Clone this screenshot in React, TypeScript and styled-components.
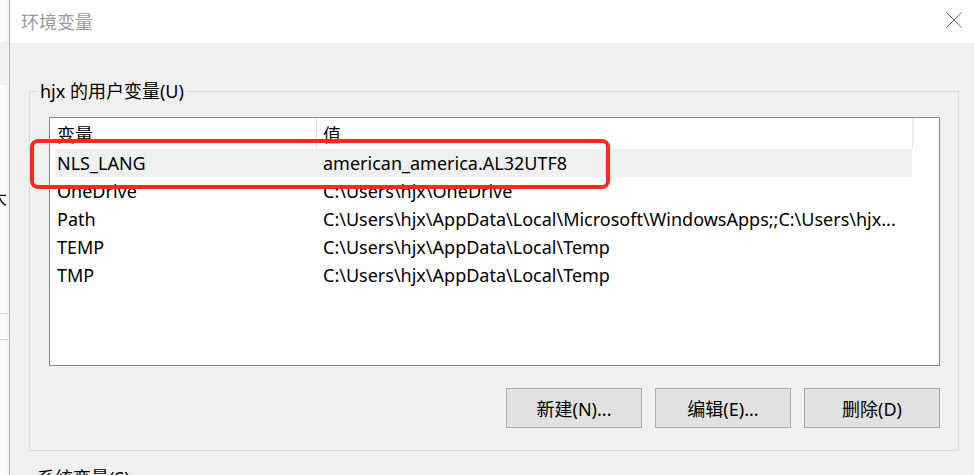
import React from 'react';
import styled, { createGlobalStyle } from 'styled-components';

const GlobalStyle = createGlobalStyle`
  html, body {
    margin: 0;
    padding: 0;
    background: #ffffff;
  }
  body {
    font-family: "Noto Sans", "Noto Sans CJK SC", sans-serif;
    font-size: 18px;
    color: #000000;
  }
`;

const Screen = styled.div`
  position: relative;
  display: flex;
  width: 974px;
  height: 475px;
  overflow: hidden;
`;

// window that sits behind the dialog, only its right edge shows
const BackWindow = styled.div`
  width: 9px;
  flex-shrink: 0;
  display: flex;
  flex-direction: column;
  overflow: hidden;
  background: linear-gradient(to right, #ffffff 0%, #ffffff 40%, #f2f2f2 100%);
`;

const BackBand = styled.div<{ $h: number; $bg: string }>`
  height: ${(p) => p.$h}px;
  flex-shrink: 0;
  background: ${(p) => p.$bg};
`;

const BackText = styled.div`
  margin: 103px 0 0 -10px;
  line-height: 20px;
  font-size: 17px;
  white-space: nowrap;
`;

const BackRule = styled.div<{ $top: number }>`
  margin-top: ${(p) => p.$top}px;
  height: 1px;
  background: #d9d9d9;
`;

const Dialog = styled.div`
  flex: 1;
  display: flex;
  flex-direction: column;
  border-left: 1px solid #b4b4b4;
`;

const TitleBar = styled.div`
  height: 43px;
  flex-shrink: 0;
  display: flex;
  align-items: center;
  justify-content: space-between;
  padding: 0 12px 0 11px;
  background: #ffffff;
`;

const Title = styled.span`
  color: #9a9a9a;
  margin-top: -2px;
`;

const CloseButton = styled.div`
  width: 16px;
  height: 16px;
  margin-top: -3px;
  display: flex;
`;

const Body = styled.div`
  flex: 1;
  background: #f0f0f0;
  padding: 48px 15px 0 19px;
`;

const GroupBox = styled.div`
  border: 1px solid #dcdcdc;
  padding: 0 18px 22px 19px;
  display: flex;
  flex-direction: column;
`;

const Legend = styled.div`
  align-self: flex-start;
  margin: -13px 0 0 -12px;
  padding: 0 3px;
  line-height: 24px;
  background: #f0f0f0;
`;

const ListView = styled.div`
  margin-top: 14px;
  height: 247px;
  border: 1px solid #828790;
  background: #ffffff;
  display: flex;
  flex-direction: column;
`;

const HeaderRow = styled.div`
  display: flex;
  height: 31px;
  flex-shrink: 0;
`;

const HeaderCell = styled.div<{ $w: number; $pad: number }>`
  width: ${(p) => p.$w}px;
  padding-left: ${(p) => p.$pad}px;
  box-sizing: border-box;
  border-right: 1px solid #e5e5e5;
  display: flex;
  align-items: center;
`;

const Row = styled.div<{ $selected?: boolean }>`
  display: flex;
  height: 28px;
  margin-left: 5px;
  width: 857px;
  background: ${(p) => (p.$selected ? '#f0f0f0' : 'transparent')};
  align-items: center;
`;

const NameCell = styled.div`
  width: 261px;
  flex-shrink: 0;
  padding-left: 2px;
  box-sizing: border-box;
  white-space: nowrap;
`;

const ValueCell = styled.div`
  flex: 1;
  min-width: 0;
  padding-left: 7px;
  white-space: nowrap;
  overflow: hidden;
`;

const ButtonRow = styled.div`
  display: flex;
  justify-content: flex-end;
  gap: 13px;
  margin-top: 22px;
`;

const Button = styled.button`
  width: 136px;
  height: 40px;
  border: 1px solid #adadad;
  background: #e1e1e1;
  font-family: inherit;
  font-size: 18px;
  color: #000000;
  padding: 0;
`;

const SectionLabel = styled.div`
  margin: 15px 0 0 8px;
  line-height: 24px;
`;

// red annotation drawn over the screenshot
const Highlight = styled.div`
  position: absolute;
  left: 30px;
  top: 139px;
  width: 580px;
  height: 50px;
  box-sizing: border-box;
  border: 4px solid #ff2a1c;
  border-radius: 8px;
  pointer-events: none;
`;

const rows = [
  { name: 'NLS_LANG', value: 'american_america.AL32UTF8' },
  { name: 'OneDrive', value: 'C:\\Users\\hjx\\OneDrive' },
  {
    name: 'Path',
    value: 'C:\\Users\\hjx\\AppData\\Local\\Microsoft\\WindowsApps;;C:\\Users\\hjx...',
  },
  { name: 'TEMP', value: 'C:\\Users\\hjx\\AppData\\Local\\Temp' },
  { name: 'TMP', value: 'C:\\Users\\hjx\\AppData\\Local\\Temp' },
];

const App: React.FC = () => {
  return (
    <>
      <GlobalStyle />
      <Screen>
        <BackWindow>
          <BackBand $h={42} $bg="transparent" />
          <BackBand $h={43} $bg="#f0f0f0" />
          <BackText>大</BackText>
          <BackRule $top={105} />
          <BackRule $top={25} />
        </BackWindow>
        <Dialog>
          <TitleBar>
            <Title>环境变量</Title>
            <CloseButton>
              <svg width="16" height="16" viewBox="0 0 16 16">
                <path d="M0.5 0.5 L15.5 15.5 M15.5 0.5 L0.5 15.5" stroke="#707070" strokeWidth="1" fill="none" />
              </svg>
            </CloseButton>
          </TitleBar>
          <Body>
            <GroupBox>
              <Legend>hjx 的用户变量(U)</Legend>
              <ListView>
                <HeaderRow>
                  <HeaderCell $w={267} $pad={7}>变量</HeaderCell>
                  <HeaderCell $w={596} $pad={6}>值</HeaderCell>
                </HeaderRow>
                {rows.map((r, i) => (
                  <Row key={r.name} $selected={i === 0}>
                    <NameCell>{r.name}</NameCell>
                    <ValueCell>{r.value}</ValueCell>
                  </Row>
                ))}
              </ListView>
              <ButtonRow>
                <Button>新建(N)...</Button>
                <Button>编辑(E)...</Button>
                <Button>删除(D)</Button>
              </ButtonRow>
            </GroupBox>
            <SectionLabel>系统变量(S)</SectionLabel>
          </Body>
        </Dialog>
        <Highlight />
      </Screen>
    </>
  );
};

export default App;
